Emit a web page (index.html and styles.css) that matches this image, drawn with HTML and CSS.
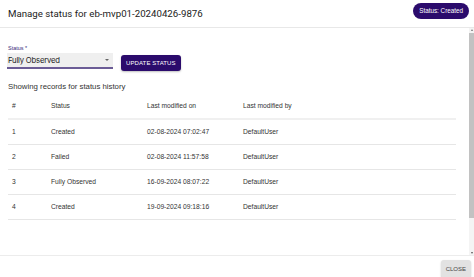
FILE: index.html
```html
<!DOCTYPE html>
<html lang="en">
<head>
<meta charset="utf-8">
<title>Manage status</title>
<link rel="stylesheet" href="styles.css">
</head>
<body>
<div class="dialog">
  <header class="dialog-title">
    <h2 class="title-text">Manage status for eb-mvp01-20240426-9876</h2>
    <span class="chip">Status: Created</span>
  </header>
  <div class="dialog-body">
    <div class="dialog-content">
      <div class="form-row">
        <div class="field">
          <label class="field-label">Status *</label>
          <div class="select">
            <span class="select-value">Fully Observed</span>
            <span class="select-arrow"></span>
          </div>
        </div>
        <button class="btn-primary">UPDATE STATUS</button>
      </div>
      <p class="caption">Showing records for status history</p>
      <table class="history">
        <thead>
          <tr><th class="c1">#</th><th class="c2">Status</th><th class="c3">Last modified on</th><th>Last modified by</th></tr>
        </thead>
        <tbody>
          <tr><td>1</td><td>Created</td><td>02-08-2024 07:02:47</td><td>DefaultUser</td></tr>
          <tr><td>2</td><td>Failed</td><td>02-08-2024 11:57:58</td><td>DefaultUser</td></tr>
          <tr><td>3</td><td>Fully Observed</td><td>16-09-2024 08:07:22</td><td>DefaultUser</td></tr>
          <tr><td>4</td><td>Created</td><td>19-09-2024 09:18:16</td><td>DefaultUser</td></tr>
        </tbody>
      </table>
    </div>
    <div class="scrollbar" aria-hidden="true">
      <span class="sb-arrow sb-up"></span>
      <span class="sb-thumb"></span>
      <span class="sb-track"></span>
      <span class="sb-arrow sb-down"></span>
    </div>
  </div>
  <footer class="dialog-actions">
    <button class="btn-close">CLOSE</button>
  </footer>
</div>
</body>
</html>
```
FILE: styles.css
```css
html, body {
  margin: 0;
  padding: 0;
  background: #fff;
  font-family: "Liberation Sans", Arial, sans-serif;
  color: #222;
}
.dialog {
  width: 474px;
  height: 277px;
  display: flex;
  flex-direction: column;
  overflow: hidden;
}
.dialog-title {
  height: 27px;
  flex: none;
  display: flex;
  align-items: center;
  justify-content: space-between;
  padding: 0 5px 0 8px;
  border-bottom: 1px solid #e8e8e8;
  box-sizing: content-box;
}
.title-text {
  margin: 0;
  font-family: Roboto, "Liberation Sans", sans-serif;
  font-weight: 400;
  font-size: 9.7px;
  color: #222;
  margin-top: -1px;
}
.chip {
  background: #2b0b6c;
  color: #fff;
  font-size: 6.3px;
  height: 16px;
  line-height: 16px;
  padding: 0 6px 0 6.5px;
  border-radius: 8px;
  margin-top: -5px;
}
.dialog-body {
  height: 227px;
  flex: none;
  display: flex;
}
.dialog-content {
  flex: 1;
  overflow: hidden;
  padding: 16px 8px 0 8px;
}
.scrollbar {
  width: 5px;
  flex: none;
  display: flex;
  flex-direction: column;
  align-items: center;
  background: #f4f4f4;
}
.sb-arrow {
  height: 5px;
  flex: none;
  width: 0;
  border-left: 1.5px solid transparent;
  border-right: 1.5px solid transparent;
  box-sizing: border-box;
  align-self: center;
}
.sb-up {
  height: 0;
  margin: 1px 0 2px;
  border-bottom: 2px solid #777;
}
.sb-down {
  height: 0;
  margin: 2px 0 1px;
  border-top: 2px solid #555;
}
.sb-thumb {
  width: 5px;
  height: 185px;
  flex: none;
  background: #c2c2c2;
}
.sb-track {
  flex: 1;
}
.form-row {
  display: flex;
  align-items: flex-end;
  gap: 8px;
}
.field {
  display: flex;
  flex-direction: column;
}
.field-label {
  font-size: 5.5px;
  line-height: 8px;
  color: #3a2a7a;
  margin-bottom: 1px;
}
.select {
  width: 101px;
  height: 14px;
  background: #efefef;
  border-bottom: 2px solid #6b5c96;
  display: flex;
  align-items: center;
  justify-content: space-between;
  padding: 0 4px 0 1px;
  box-sizing: content-box;
  margin-left: -1px;
}
.select-value {
  font-family: Inter, "Liberation Sans", sans-serif;
  font-size: 7.7px;
  color: #222;
  letter-spacing: -0.2px;
}
.select-arrow {
  width: 0;
  height: 0;
  border-left: 2.5px solid transparent;
  border-right: 2.5px solid transparent;
  border-top: 2.5px solid #666;
}
.btn-primary {
  background: #2b0b6c;
  color: #fff;
  border: none;
  border-radius: 3px;
  font-family: "Liberation Sans", sans-serif;
  font-size: 6px;
  height: 16px;
  padding: 0 5px;
  margin-bottom: -2px;
  letter-spacing: 0.1px;
  box-shadow: 0 1px 2px rgba(0,0,0,0.25);
}
.caption {
  margin: 12px 0 0;
  font-size: 7.8px;
  line-height: 12px;
  color: #333;
}
.history {
  width: 448px;
  border-collapse: collapse;
  font-size: 6.7px;
  color: #333;
}
.history th, .history td {
  text-align: left;
  font-weight: 400;
  padding: 0 0 0 4px;
  height: 25px;
  box-sizing: border-box;
  border-bottom: 1px solid #e6e6e6;
}
.history thead th {
  border-bottom: 2px solid #f0f0f0;
  height: 26px;
}
.c1 { width: 39px; }
.c2 { width: 96px; }
.c3 { width: 96px; }
.dialog-actions {
  flex: 1;
  border-top: 1px solid #ececec;
  display: flex;
  justify-content: flex-end;
  align-items: flex-start;
  padding: 4px 3px 0 0;
}
.btn-close {
  background: #e2e2e2;
  color: #444;
  border: none;
  border-radius: 3px;
  font-family: "Liberation Sans", sans-serif;
  font-size: 6px;
  height: 18px;
  padding: 0 5px;
  box-shadow: 0 1px 2px rgba(0,0,0,0.2);
}
```
